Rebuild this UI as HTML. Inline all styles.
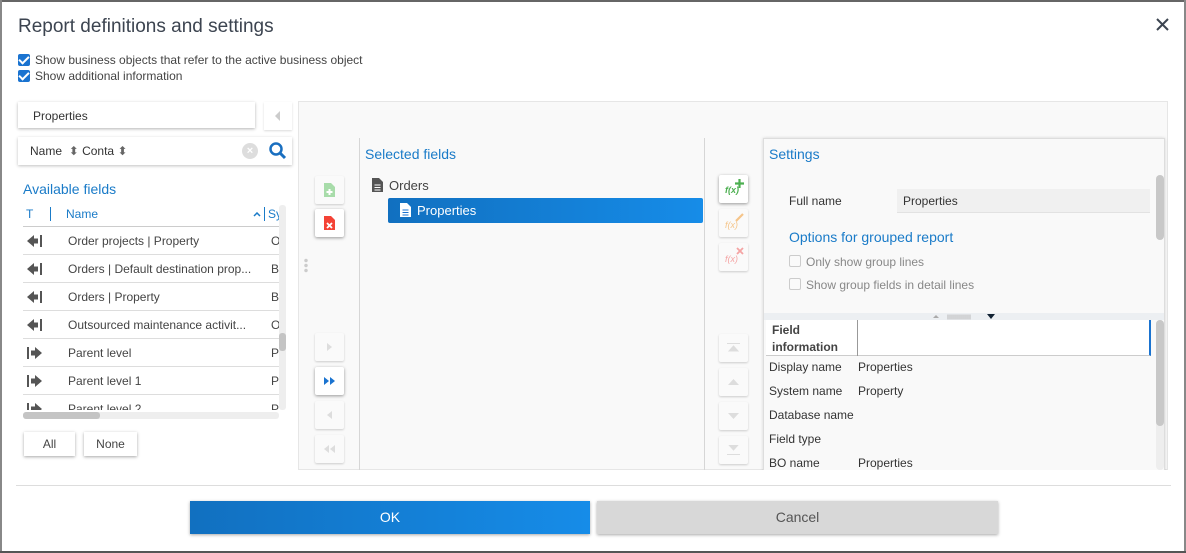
<!DOCTYPE html>
<html><head><meta charset="utf-8"><style>
*{box-sizing:border-box;margin:0;padding:0}
body{width:1186px;height:553px;background:#fff;font-family:"Liberation Sans",sans-serif;position:relative;overflow:hidden;color:#333}
.a{position:absolute}
.t{font-size:12px;white-space:nowrap}
.btn{position:absolute;width:29px;height:28px;background:#fafafa;border-radius:2px;box-shadow:0 1px 2px rgba(0,0,0,.18)}
.btn.on{background:#fff;box-shadow:0 1px 3px rgba(0,0,0,.4)}
.cb{position:absolute;width:12px;height:12px;background:#1a73d0;border-radius:2px}
.cb:after{content:"";position:absolute;left:3px;top:0px;width:4px;height:8px;border:solid #fff;border-width:0 2px 2px 0;transform:rotate(45deg)}
.row{position:absolute;left:23px;width:256px;height:28px;border-bottom:1px solid #ddd;font-size:12px;color:#444}
.row span{position:absolute;top:7px}
.row svg{position:absolute;left:4px;top:7px}
.blue{color:#1a7bc8}
</style></head><body>
<div class="a" style="left:0;top:0;width:1186px;height:2px;background:#666"></div>
<div class="a" style="left:0;top:0;width:2px;height:553px;background:#888"></div>
<div class="a" style="right:0;top:0;width:2px;height:553px;background:#888"></div>
<div class="a" style="left:0;bottom:0;width:1186px;height:2px;background:#555"></div>

<div class="a" style="left:18px;top:16px;font-size:19px;color:#3c4450">Report definitions and settings</div>
<svg class="a" style="left:1156px;top:18px" width="13" height="13"><path d="M1 1L12 12M12 1L1 12" stroke="#3c4450" stroke-width="2"/></svg>

<div class="cb" style="left:18px;top:54px"></div><div class="a t" style="left:35px;top:53px;color:#444">Show business objects that refer to the active business object</div>
<div class="cb" style="left:18px;top:70px"></div><div class="a t" style="left:35px;top:69px;color:#444">Show additional information</div>

<div class="a" style="left:18px;top:102px;width:237px;height:26px;background:#fff;box-shadow:0 1px 3px rgba(0,0,0,.3)"></div>
<div class="a t" style="left:33px;top:109px;color:#333">Properties</div>
<div class="a" style="left:264px;top:102px;width:28px;height:28px;background:#fff;box-shadow:0 1px 2px rgba(0,0,0,.15)"></div>
<svg class="a" style="left:275px;top:111px" width="6" height="10"><path d="M5 0L0 5L5 10Z" fill="#ccc"/></svg>

<div class="a" style="left:18px;top:137px;width:274px;height:28px;background:#fff;box-shadow:0 1px 3px rgba(0,0,0,.25)"></div>
<div class="a t" style="left:30px;top:144px;color:#333">Name&nbsp;&nbsp;<span style="color:#666">⬍</span> Conta <span style="color:#666">⬍</span></div>
<div class="a" style="left:242px;top:143px;width:16px;height:16px;border-radius:50%;background:#ddd;color:#fff;font-size:11px;text-align:center;line-height:16px;font-weight:bold">×</div>
<svg class="a" style="left:269px;top:142px" width="18" height="18"><circle cx="7" cy="7" r="5.5" stroke="#1a6fc0" stroke-width="2.5" fill="none"/><path d="M11 11L16 16" stroke="#1a6fc0" stroke-width="3"/></svg>

<div class="a blue" style="left:23px;top:181px;font-size:14px">Available fields</div>
<div class="a t blue" style="left:26px;top:207px">T</div>
<div class="a" style="left:50px;top:207px;width:1px;height:14px;background:#1a7bc8"></div>
<div class="a t blue" style="left:66px;top:207px">Name</div>
<svg class="a" style="left:253px;top:212px" width="8" height="5"><path d="M1 4L4 1L7 4" stroke="#1a7bc8" stroke-width="1.5" fill="none"/></svg>
<div class="a" style="left:264px;top:207px;width:1px;height:14px;background:#1a7bc8"></div>
<div class="a t blue" style="left:268px;top:207px;width:11px;overflow:hidden">Sy</div>
<div class="a" style="left:23px;top:226px;width:256px;height:1px;background:#ccc"></div>
<div class="a" style="left:23px;top:227px;width:256px;height:183px;overflow:hidden">
<div class="row" style="left:0;top:0"><svg width="16" height="14"><path d="M0 7L7 1V4.5H11V9.5H7V13Z" fill="#555"/><rect x="13" y="1" width="2" height="12" fill="#555"/></svg><span style="left:45px">Order projects | Property</span><span style="left:248px">O</span></div>
<div class="row" style="left:0;top:28px"><svg width="16" height="14"><path d="M0 7L7 1V4.5H11V9.5H7V13Z" fill="#555"/><rect x="13" y="1" width="2" height="12" fill="#555"/></svg><span style="left:45px">Orders | Default destination prop...</span><span style="left:248px">B</span></div>
<div class="row" style="left:0;top:56px"><svg width="16" height="14"><path d="M0 7L7 1V4.5H11V9.5H7V13Z" fill="#555"/><rect x="13" y="1" width="2" height="12" fill="#555"/></svg><span style="left:45px">Orders | Property</span><span style="left:248px">B</span></div>
<div class="row" style="left:0;top:84px"><svg width="16" height="14"><path d="M0 7L7 1V4.5H11V9.5H7V13Z" fill="#555"/><rect x="13" y="1" width="2" height="12" fill="#555"/></svg><span style="left:45px">Outsourced maintenance activit...</span><span style="left:248px">O</span></div>
<div class="row" style="left:0;top:112px"><svg width="16" height="14"><rect x="0" y="1" width="2" height="12" fill="#555"/><path d="M15 7L8 1V4.5H4V9.5H8V13Z" fill="#555"/></svg><span style="left:45px">Parent level</span><span style="left:248px">P</span></div>
<div class="row" style="left:0;top:140px"><svg width="16" height="14"><rect x="0" y="1" width="2" height="12" fill="#555"/><path d="M15 7L8 1V4.5H4V9.5H8V13Z" fill="#555"/></svg><span style="left:45px">Parent level 1</span><span style="left:248px">P</span></div>
<div class="row" style="left:0;top:168px"><svg width="16" height="14"><rect x="0" y="1" width="2" height="12" fill="#555"/><path d="M15 7L8 1V4.5H4V9.5H8V13Z" fill="#555"/></svg><span style="left:45px">Parent level 2</span><span style="left:248px">P</span></div>
</div>
<div class="a" style="left:279px;top:205px;width:7px;height:205px;background:#eee;border-radius:3px"></div>
<div class="a" style="left:279px;top:333px;width:7px;height:18px;background:#c4c4c4;border-radius:3px"></div>
<div class="a" style="left:23px;top:412px;width:256px;height:7px;background:#eee;border-radius:3px"></div>
<div class="a" style="left:23px;top:412px;width:77px;height:7px;background:#c4c4c4;border-radius:3px"></div>

<div class="a t" style="left:24px;top:432px;width:51px;height:24px;box-shadow:0 1px 3px rgba(0,0,0,.35);text-align:center;line-height:24px;color:#444">All</div>
<div class="a t" style="left:84px;top:432px;width:53px;height:24px;box-shadow:0 1px 3px rgba(0,0,0,.35);text-align:center;line-height:24px;color:#444">None</div>

<div class="a" style="left:298px;top:101px;width:870px;height:369px;background:#f9f9f9;border:1px solid #e6e6e6"></div>
<div class="a" style="left:359px;top:138px;width:1px;height:332px;background:#d6d6d6"></div>
<div class="a" style="left:704px;top:138px;width:1px;height:332px;background:#d6d6d6"></div>
<div class="a" style="left:304px;top:258px;width:4px;height:15px;background:radial-gradient(circle,#ccc 1.5px,transparent 2px) 0 0/4px 5px"></div>

<div class="btn" style="left:315px;top:176px"><svg style="position:absolute;left:9px;top:7px" width="11" height="14"><path d="M0 0H7L11 4V14H0Z" fill="#a8dcaa"/><path d="M5.5 6V12M2.5 9H8.5" stroke="#fff" stroke-width="2"/></svg></div>
<div class="btn on" style="left:315px;top:209px"><svg style="position:absolute;left:9px;top:7px" width="11" height="14"><path d="M0 0H7L11 4V14H0Z" fill="#f44336"/><path d="M3 7L8 12M8 7L3 12" stroke="#fff" stroke-width="1.8"/></svg></div>
<div class="btn" style="left:315px;top:333px"><svg style="position:absolute;left:12px;top:10px" width="5" height="8"><path d="M0 0L5 4L0 8Z" fill="#ddd"/></svg></div>
<div class="btn on" style="left:315px;top:367px"><svg style="position:absolute;left:9px;top:10px" width="11" height="8"><path d="M0 0L5 4L0 8ZM6 0L11 4L6 8Z" fill="#1a73d0"/></svg></div>
<div class="btn" style="left:315px;top:401px"><svg style="position:absolute;left:12px;top:10px" width="5" height="8"><path d="M5 0L0 4L5 8Z" fill="#ddd"/></svg></div>
<div class="btn" style="left:315px;top:435px"><svg style="position:absolute;left:9px;top:10px" width="11" height="8"><path d="M5 0L0 4L5 8ZM11 0L6 4L11 8Z" fill="#ddd"/></svg></div>

<div class="a blue" style="left:365px;top:146px;font-size:14px">Selected fields</div>
<svg class="a" style="left:372px;top:178px" width="11" height="14"><path d="M0 0H7L11 4V14H0Z" fill="#555"/><path d="M2.5 7H8.5M2.5 9.5H8.5M2.5 12H8.5" stroke="#fff" stroke-width="1"/></svg>
<div class="a t" style="left:389px;top:178px;font-size:13px;color:#444">Orders</div>
<div class="a" style="left:388px;top:198px;width:315px;height:25px;border-radius:2px;background:linear-gradient(90deg,#1170c0,#168ce8)"></div>
<svg class="a" style="left:400px;top:203px" width="11" height="14"><path d="M0 0H7L11 4V14H0Z" fill="#fff"/><path d="M2.5 7H8.5M2.5 9.5H8.5M2.5 12H8.5" stroke="#1a73d0" stroke-width="1"/></svg>
<div class="a t" style="left:417px;top:203px;font-size:13px;color:#fff">Properties</div>

<div class="btn on" style="left:719px;top:175px"><span style="position:absolute;left:6px;top:10px;font-size:9px;color:#4caf50;font-style:italic;font-weight:bold">f(x)</span><svg style="position:absolute;left:16px;top:4px" width="9" height="9"><path d="M4.5 0V9M0 4.5H9" stroke="#4caf50" stroke-width="2.2"/></svg></div>
<div class="btn" style="left:719px;top:209px"><span style="position:absolute;left:6px;top:11px;font-size:9px;color:#f5c58a;font-style:italic">f(x)</span><svg style="position:absolute;left:16px;top:4px" width="9" height="9"><path d="M1 8L8 1" stroke="#f5c58a" stroke-width="2.2"/></svg></div>
<div class="btn" style="left:719px;top:243px"><span style="position:absolute;left:6px;top:11px;font-size:9px;color:#f4a4a4;font-style:italic">f(x)</span><svg style="position:absolute;left:17px;top:4px" width="8" height="8"><path d="M1 1L7 7M7 1L1 7" stroke="#f4a4a4" stroke-width="1.8"/></svg></div>
<div class="btn" style="left:719px;top:334px"><svg style="position:absolute;left:8px;top:9px" width="13" height="10"><path d="M0 0.5H13M6.5 3L11 8H2Z" stroke="#ddd" fill="#ddd"/></svg></div>
<div class="btn" style="left:719px;top:368px"><svg style="position:absolute;left:9px;top:11px" width="11" height="6"><path d="M5.5 0L11 6H0Z" fill="#ddd"/></svg></div>
<div class="btn" style="left:719px;top:402px"><svg style="position:absolute;left:9px;top:11px" width="11" height="6"><path d="M0 0H11L5.5 6Z" fill="#ddd"/></svg></div>
<div class="btn" style="left:719px;top:436px"><svg style="position:absolute;left:8px;top:9px" width="13" height="10"><path d="M2 0H11L6.5 5ZM0 9.5H13" stroke="#ddd" fill="#ddd"/></svg></div>

<div class="a" style="left:763px;top:138px;width:402px;height:340px;background:#f9f9f9;border:1px solid #ddd;box-shadow:0 0 3px rgba(0,0,0,.15)"></div>
<div class="a blue" style="left:769px;top:146px;font-size:14px">Settings</div>
<div class="a t" style="left:789px;top:194px;color:#333">Full name</div>
<div class="a" style="left:897px;top:189px;width:253px;height:24px;background:#f0f0f0;border-bottom:1px solid #e2e2e2"></div>
<div class="a t" style="left:903px;top:194px;color:#333">Properties</div>
<div class="a blue" style="left:789px;top:229px;font-size:14px">Options for grouped report</div>
<div class="a" style="left:789px;top:255px;width:12px;height:12px;border:1px solid #ccc;border-radius:2px;background:#fafafa"></div>
<div class="a t" style="left:806px;top:255px;color:#888">Only show group lines</div>
<div class="a" style="left:789px;top:278px;width:12px;height:12px;border:1px solid #ccc;border-radius:2px;background:#fafafa"></div>
<div class="a t" style="left:806px;top:278px;color:#888">Show group fields in detail lines</div>
<div class="a" style="left:1156px;top:175px;width:8px;height:65px;background:#c8c8c8;border-radius:4px"></div>
<div class="a" style="left:764px;top:313px;width:400px;height:7px;background:#eceff2"></div>
<svg class="a" style="left:932px;top:313px" width="66" height="7"><path d="M1 5L4 2L7 5Z" fill="#aaa"/><path d="M16 1.5V6.5M18 1.5V6.5M20 1.5V6.5M22 1.5V6.5M24 1.5V6.5M26 1.5V6.5M28 1.5V6.5M30 1.5V6.5M32 1.5V6.5M34 1.5V6.5M36 1.5V6.5M38 1.5V6.5" stroke="#aaa" stroke-width="0.8"/><path d="M55 1H63L59 6Z" fill="#123"/></svg>
<div class="a" style="left:766px;top:320px;width:385px;height:36px;background:#fff;border-right:2px solid #1a73d0;border-bottom:1px solid #ccc"></div>
<div class="a" style="left:857px;top:320px;width:1px;height:36px;background:#999"></div>
<div class="a t" style="left:772px;top:322px;font-weight:bold;color:#444;line-height:17px">Field<br>information</div>
<div class="a t" style="left:769px;top:360px">Display name</div><div class="a t" style="left:858px;top:360px">Properties</div>
<div class="a t" style="left:769px;top:384px">System name</div><div class="a t" style="left:858px;top:384px">Property</div>
<div class="a t" style="left:769px;top:408px">Database name</div>
<div class="a t" style="left:769px;top:432px">Field type</div>
<div class="a t" style="left:769px;top:456px">BO name</div><div class="a t" style="left:858px;top:456px">Properties</div>
<div class="a" style="left:1156px;top:320px;width:8px;height:150px;background:#eee;border-radius:4px"></div>
<div class="a" style="left:1156px;top:320px;width:8px;height:106px;background:#c8c8c8;border-radius:4px"></div>
<div class="a" style="left:298px;top:470px;width:870px;height:15px;background:#fff"></div>

<div class="a" style="left:16px;top:485px;width:1155px;height:1px;background:#ddd"></div>
<div class="a" style="left:190px;top:501px;width:400px;height:33px;background:linear-gradient(90deg,#1170c0,#168ce8);box-shadow:0 1px 3px rgba(0,0,0,.35);color:#fff;font-size:14px;text-align:center;line-height:33px">OK</div>
<div class="a" style="left:597px;top:501px;width:401px;height:33px;background:#d8d8d8;box-shadow:0 1px 3px rgba(0,0,0,.35);color:#555;font-size:14px;text-align:center;line-height:33px">Cancel</div>
</body></html>
